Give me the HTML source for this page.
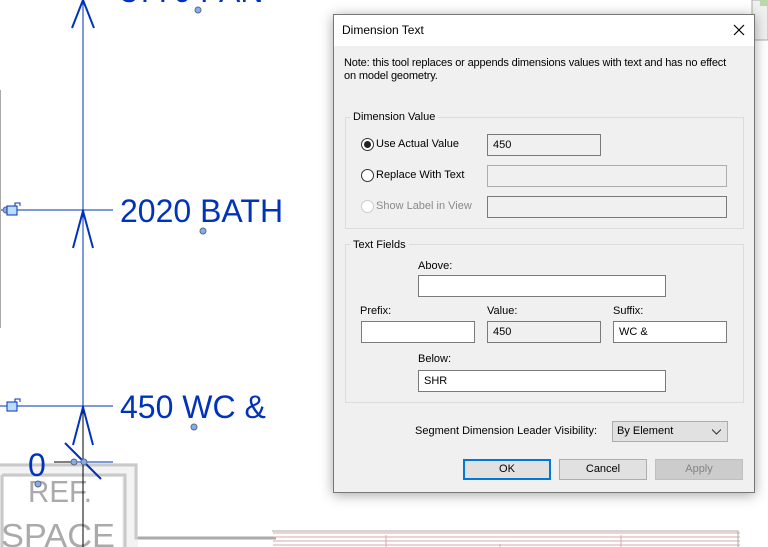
<!DOCTYPE html>
<html><head><meta charset="utf-8"><style>
*{margin:0;padding:0;box-sizing:border-box}
body{width:768px;height:547px;overflow:hidden;background:#fff;position:relative;font-family:"Liberation Sans",sans-serif;font-size:11px;color:#000}
.a{position:absolute}
.dlg{left:333px;top:14px;width:422px;height:479px;background:#f0f0f0;border:1px solid #777;box-shadow:0 2px 12px rgba(0,0,0,.35)}
.tb{left:0;top:0;width:420px;height:31px;background:#fff}
.in{position:absolute;height:22px;border:1px solid #7a7a7a;background:#fff;padding:4px 5px;font-size:11px}
.dis{background:#f0f0f0;border-color:#adadad}
.grp{position:absolute;border:1px solid #dcdcdc}
.lg{position:absolute;background:#f0f0f0;padding:0 3px;font-size:11px}
.lb{position:absolute;font-size:11px;white-space:nowrap}
.btn{position:absolute;height:21px;width:88px;border:1px solid #adadad;background:#e1e1e1;text-align:center;line-height:19px;font-size:11px}
.rad{position:absolute;width:13px;height:13px;border:1px solid #333;border-radius:50%;background:#fff}
</style></head><body>
<svg class="a" style="left:0;top:0" width="768" height="547">
<g stroke="#aaa" fill="none" stroke-width="3">
<path d="M0 465 H136 V538 H276"/>
<path d="M2 475 H125 V547"/>
<path d="M2 475 V547"/>
</g>
<rect x="0" y="463" width="138" height="84" fill="#e8e8e8" opacity=".5"/>
<rect x="4" y="477" width="118" height="70" fill="#fff"/>
<text x="28" y="502" font-family="Liberation Sans" font-size="31" fill="#aaa" textLength="64" lengthAdjust="spacingAndGlyphs">REF.</text>
<text x="1" y="547" font-family="Liberation Sans" font-size="33" fill="#aaa" textLength="114" lengthAdjust="spacingAndGlyphs">SPACE</text>
<g stroke="#d8a8a8" fill="none" stroke-width="1">
<path d="M273 533 H740 M273 537 H740 M273 541 H740 M273 545 H740"/>
<path d="M386 535 V547 M621 535 V547 M500 544 V547"/>
</g>
<path d="M272 531 H738 V547" stroke="#aaa" fill="none"/>
<g stroke="#0033bb" fill="none">
<path d="M83 0 V547" stroke="#000" stroke-width="1"/>
<path d="M83 0 V410" stroke-width="1"/>
<path d="M0 210 H113 M0 406 H113 M54 462 H113" stroke-width="1"/>
<path d="M72 28 L83 0 L94 28 M73 248 L83 211 L93 248 M73 445 L83 407 L93 445" stroke-width="2"/>
<path d="M65 443 L101 479" stroke-width="2"/>
</g>
<path d="M54 462 H75" stroke="#000"/>
<g font-family="Liberation Sans" font-size="32" fill="#0033bb">
<text x="120" y="2">3770 PAN</text>
<text x="120" y="222">2020 BATH</text>
<text x="120" y="418">450 WC &amp;</text>
<text x="28" y="476">0</text>
</g>
<g fill="#7fb0ee" stroke="#667" stroke-width="1">
<circle cx="198" cy="10" r="3"/><circle cx="203" cy="231" r="3"/><circle cx="194" cy="427" r="3"/>
<circle cx="38" cy="484" r="3"/><circle cx="74" cy="462" r="3"/><circle cx="84" cy="462" r="3"/><circle cx="6" cy="210" r="3"/>
</g>
<g stroke="#0033bb" fill="#bdf">
<rect x="7" y="206" width="10" height="9"/><rect x="7" y="402" width="10" height="9"/>
</g>
<path d="M15 206 V203 H20 V206 M15 402 V399 H20 V402" stroke="#0033bb" fill="none"/>
<rect x="0" y="90" width="1" height="238" fill="#aaa"/>
<rect x="752" y="0" width="16" height="40" fill="#f0f0f0" stroke="#aaa"/>
<rect x="760" y="0" width="8" height="6" fill="#bcd8a8"/>
</svg>
<div class="a dlg">
<div class="a tb"><span class="a" style="left:8px;top:8px;font-size:12px">Dimension Text</span>
<svg class="a" style="left:399px;top:9px" width="12" height="12"><path d="M1 1L11 11M11 1L1 11" stroke="#000" stroke-width="1.2"/></svg></div>
<div class="lb" style="left:10px;top:42px;line-height:13px;letter-spacing:-0.15px">Note: this tool replaces or appends dimensions values with text and has no effect<br>on model geometry.</div>
<div class="grp" style="left:11px;top:102px;width:399px;height:112px"></div>
<div class="lg" style="left:16px;top:96px">Dimension Value</div>
<div class="rad" style="left:27px;top:123px"><div style="position:absolute;left:2px;top:2px;width:7px;height:7px;border-radius:50%;background:#222"></div></div>
<div class="lb" style="left:42px;top:123px">Use Actual Value</div>
<div class="in dis" style="left:153px;top:119px;width:114px;border-color:#7a7a7a">450</div>
<div class="rad" style="left:27px;top:154px"></div>
<div class="lb" style="left:42px;top:154px">Replace With Text</div>
<div class="in dis" style="left:153px;top:150px;width:240px"></div>
<div class="rad" style="left:27px;top:185px;border-color:#ccc"></div>
<div class="lb" style="left:42px;top:185px;color:#8a8a8a">Show Label in View</div>
<div class="in dis" style="left:153px;top:181px;width:240px;border-color:#7a7a7a"></div>
<div class="grp" style="left:11px;top:229px;width:399px;height:159px"></div>
<div class="lg" style="left:16px;top:224px">Text Fields</div>
<div class="lb" style="left:84px;top:245px">Above:</div>
<div class="in" style="left:84px;top:260px;width:248px"></div>
<div class="lb" style="left:26px;top:290px">Prefix:</div>
<div class="lb" style="left:153px;top:290px">Value:</div>
<div class="lb" style="left:279px;top:290px">Suffix:</div>
<div class="in" style="left:27px;top:306px;width:114px"></div>
<div class="in dis" style="left:153px;top:306px;width:114px;border-color:#7a7a7a">450</div>
<div class="in" style="left:279px;top:306px;width:114px">WC &amp;</div>
<div class="lb" style="left:84px;top:338px">Below:</div>
<div class="in" style="left:84px;top:355px;width:248px">SHR</div>
<div class="lb" style="right:157px;top:410px">Segment Dimension Leader Visibility:</div>
<div class="in dis" style="left:278px;top:406px;width:116px;height:21px;background:#e1e1e1;padding:3px 4px">By Element
<svg style="position:absolute;right:6px;top:7px" width="9" height="6"><path d="M0 0.5L4.5 5L9 0.5" stroke="#333" fill="none"/></svg></div>
<div class="btn" style="left:129px;top:444px;border:2px solid #0078d7;line-height:17px">OK</div>
<div class="btn" style="left:225px;top:444px">Cancel</div>
<div class="btn" style="left:321px;top:444px;background:#ccc;border-color:#bfbfbf;color:#838383">Apply</div>
</div>
</body></html>
